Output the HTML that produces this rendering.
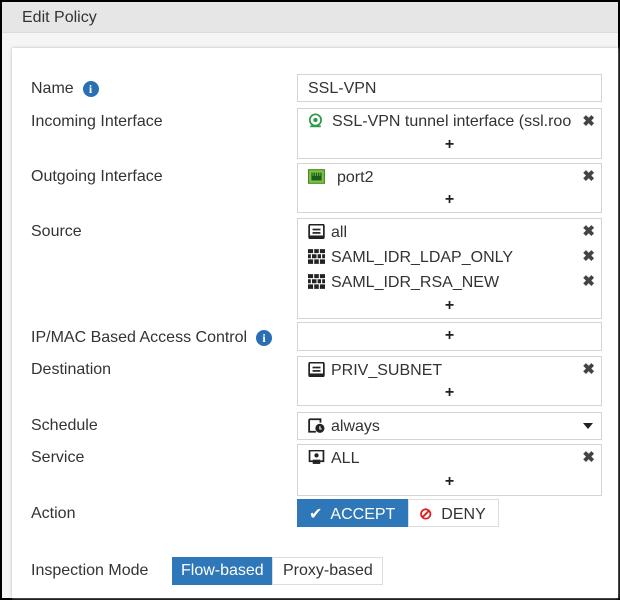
<!DOCTYPE html><html><head><style>
*{margin:0;padding:0;box-sizing:border-box}
body{width:620px;height:600px;overflow:hidden;background:#000;font-family:"Liberation Sans",sans-serif;color:#333;font-size:16px;position:relative}
#f{position:absolute;left:2px;top:2px;width:616px;height:596px;background:#f5f5f5}
#hb{position:absolute;left:2px;top:2px;width:616px;height:31px;background:#e6e6e6;border-bottom:1px solid #dcdcdc}
#hd{position:absolute;left:22px;top:9px;font-size:16px;color:#333}
#p{position:absolute;left:12px;top:48px;width:606px;height:550px;background:#fff;box-shadow:0 0 3px #bbb}
.a{position:absolute}
.l{position:absolute;left:31px;font-size:16px;color:#333}
.b{position:absolute;left:297px;width:305px;border:1px solid #d4d4d4;background:#fff}
.r{position:absolute;left:10px;font-size:16px;white-space:nowrap}
.x{position:absolute;right:6px;font-size:15px;font-weight:bold;color:#444}
.pl{position:absolute;left:0;right:0;text-align:center;font-weight:bold;font-size:16px;color:#222}
.i{display:inline-block;width:16px;height:16px;border-radius:50%;background:#2a6fb4;color:#fff;font-size:12px;font-weight:bold;text-align:center;line-height:16px;font-family:"Liberation Serif",serif;vertical-align:0px}
.ic{display:inline-block;width:17px;height:15px;vertical-align:-2px;margin-right:8px}
</style></head><body>
<div id="f"></div>
<div id="hb"></div>
<div id="hd">Edit Policy</div>
<div id="p"></div>
<div class="l" style="top:80px">Name &nbsp;<span class="i">i</span></div>
<div class="l" style="top:113px">Incoming Interface</div>
<div class="l" style="top:168px">Outgoing Interface</div>
<div class="l" style="top:223px">Source</div>
<div class="l" style="top:329px">IP/MAC Based Access Control &nbsp;<span class="i">i</span></div>
<div class="l" style="top:361px">Destination</div>
<div class="l" style="top:417px">Schedule</div>
<div class="l" style="top:449px">Service</div>
<div class="l" style="top:505px">Action</div>
<div class="l" style="top:562px">Inspection Mode</div>

<div class="b" style="top:74px;height:28px"><div class="r" style="top:5px">SSL-VPN</div></div>

<div class="b" style="top:108px;height:51px"><div class="r" style="top:4px"><svg class="ic" viewBox="0 0 15 13" style="width:16px"><circle cx="7" cy="6" r="5.3" fill="none" stroke="#2a9a4a" stroke-width="1.6"/><circle cx="7" cy="6" r="2" fill="#2a9a4a"/><rect x="2" y="11.2" width="10" height="1.6" fill="#2a9a4a"/></svg>SSL-VPN tunnel interface (ssl.roo</div><div class="x" style="top:3px">✖</div><div class="pl" style="top:27px">+</div></div>

<div class="b" style="top:163px;height:50px"><div class="r" style="top:5px"><svg class="ic" viewBox="0 0 15 13" style="margin-right:12px"><rect x="0.5" y="0.5" width="14" height="12" fill="#7cc442" stroke="#4a8a2a"/><rect x="3" y="3" width="9" height="7" fill="#1d5a1d"/><path d="M4.5 3v3M6.5 3v3M8.5 3v3M10.5 3v3" stroke="#7cc442" stroke-width="0.8"/></svg>port2</div><div class="x" style="top:3px">✖</div><div class="pl" style="top:27px">+</div></div>

<div class="b" style="top:218px;height:101px">
<div class="r" style="top:5px"><svg class="ic" viewBox="0 0 15 13" style="margin-right:6px"><rect x="1" y="0.5" width="13" height="12" rx="1" fill="#fff" stroke="#222" stroke-width="1.5"/><rect x="4" y="4" width="7" height="1.5" fill="#222"/><rect x="4" y="7" width="7" height="1.5" fill="#222"/><rect x="1" y="10" width="13" height="3" fill="#222"/></svg>all</div><div class="x" style="top:3px">✖</div>
<div class="r" style="top:30px"><svg class="ic" viewBox="0 0 15 13" style="margin-right:6px"><rect width="15" height="13" fill="#222"/><path d="M0 4h15M0 8.5h15M5 0v4M10 0v4M3 4v4.5M8 4v4.5M12 4v4.5M5 8.5v4.5M10 8.5v4.5" stroke="#fff" stroke-width="1"/></svg>SAML_IDR_LDAP_ONLY</div><div class="x" style="top:28px">✖</div>
<div class="r" style="top:55px"><svg class="ic" viewBox="0 0 15 13" style="margin-right:6px"><rect width="15" height="13" fill="#222"/><path d="M0 4h15M0 8.5h15M5 0v4M10 0v4M3 4v4.5M8 4v4.5M12 4v4.5M5 8.5v4.5M10 8.5v4.5" stroke="#fff" stroke-width="1"/></svg>SAML_IDR_RSA_NEW</div><div class="x" style="top:53px">✖</div>
<div class="pl" style="top:78px">+</div></div>

<div class="b" style="top:322px;height:29px"><div class="pl" style="top:4px">+</div></div>

<div class="b" style="top:356px;height:50px"><div class="r" style="top:5px"><svg class="ic" viewBox="0 0 15 13" style="margin-right:6px"><rect x="1" y="0.5" width="13" height="12" rx="1" fill="#fff" stroke="#222" stroke-width="1.5"/><rect x="4" y="4" width="7" height="1.5" fill="#222"/><rect x="4" y="7" width="7" height="1.5" fill="#222"/><rect x="1" y="10" width="13" height="3" fill="#222"/></svg>PRIV_SUBNET</div><div class="x" style="top:3px">✖</div><div class="pl" style="top:27px">+</div></div>

<div class="b" style="top:412px;height:28px"><div class="r" style="top:5px"><svg class="ic" viewBox="0 0 15 13" style="margin-right:6px"><path d="M1 1h10v3M1 1v11h6" fill="none" stroke="#222" stroke-width="1.6"/><circle cx="10.5" cy="9" r="4" fill="#222"/><path d="M10.5 7v2.5h1.5" stroke="#fff" stroke-width="1" fill="none"/></svg>always</div><div class="a" style="right:8px;top:10px;width:0;height:0;border-left:5px solid transparent;border-right:5px solid transparent;border-top:6px solid #222"></div></div>

<div class="b" style="top:444px;height:52px"><div class="r" style="top:5px"><svg class="ic" viewBox="0 0 15 14" style="margin-right:6px"><rect x="1" y="0.5" width="13" height="10" fill="#fff" stroke="#222" stroke-width="1.6"/><circle cx="7.5" cy="5" r="2" fill="#222"/><path d="M4 13h7v-4h-7z" fill="#222"/></svg>ALL</div><div class="x" style="top:3px">✖</div><div class="pl" style="top:28px">+</div></div>

<div class="a" style="left:297px;top:499px;width:111px;height:28px;background:#2e77b8;color:#fff;padding:5px 0 0 12px;font-size:16px">✔&nbsp; ACCEPT</div>
<div class="a" style="left:408px;top:499px;width:91px;height:28px;border:1px solid #ddd;padding:4px 0 0 10px;font-size:16px"><span style="color:#d22;font-weight:bold">⊘</span>&nbsp; DENY</div>

<div class="a" style="left:172px;top:557px;width:100px;height:28px;background:#2e77b8;color:#fff;padding:5px 0 0 9px;font-size:16px">Flow-based</div>
<div class="a" style="left:272px;top:557px;width:111px;height:28px;border:1px solid #ddd;padding:4px 0 0 10px;font-size:16px">Proxy-based</div>
</body></html>
